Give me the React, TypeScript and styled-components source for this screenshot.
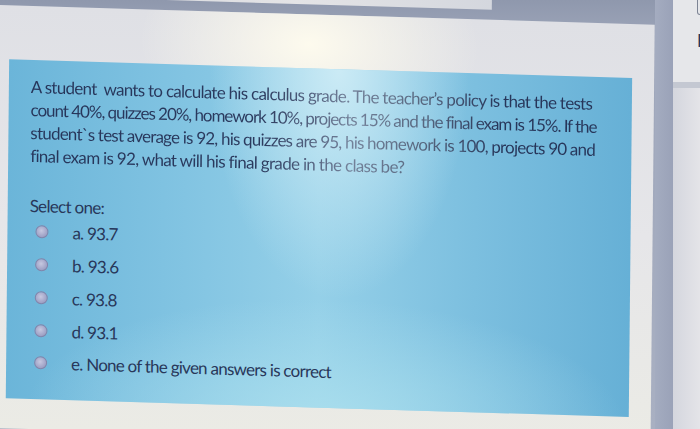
import { createGlobalStyle, styled } from "styled-components";

const GlobalStyle = createGlobalStyle`
    html, body {
        margin: 0;
        padding: 0;
        background: #9aa2b7;
    }
    body {
        font-family: Lato, "Liberation Sans", Arial, sans-serif;
    }
`;

const Page = styled.div`
    display: flex;
    width: 700px;
    height: 429px;
    overflow: hidden;
    background: linear-gradient(180deg, #8f98ad 0px, #9ea6ba 40px, #a9b0c2 100%);
`;

// the screen was photographed at a slight angle, so the column is skewed a little
const MainColumn = styled.div`
    width: 655px;
    margin-top: -25px;
    display: flex;
    flex-direction: column;
    gap: 10px;
    padding-bottom: 1px;
    transform-origin: 0 0;
    transform: matrix(1, 0.03, -0.01, 1, 0, 0);
`;

const PrevCard = styled.div`
    width: 492px;
    height: 20px;
    background: linear-gradient(90deg, #d0d3da 0%, #e4e4e6 60%, #d4d7de 100%);
`;

const QuestionCard = styled.div`
    flex: 1;
    display: flex;
    flex-direction: column;
    padding: 54px 22px 30px 10px;
    background:
        radial-gradient(ellipse 170px 110px at 310px 30px, rgba(255, 252, 238, 0.95), rgba(255, 252, 238, 0) 100%),
        linear-gradient(180deg, #dfe0e5 0%, #e6e6e9 50%, #ebebe5 100%);
`;

const Formulation = styled.div`
    flex: 1;
    padding: 15px 20px 0 22px;
    background:
        radial-gradient(ellipse 130px 230px at 330px 0px, rgba(206, 236, 246, 0.95), rgba(206, 236, 246, 0) 100%),
        radial-gradient(ellipse 300px 120px at 320px 350px, rgba(172, 224, 238, 0.85), rgba(172, 224, 238, 0) 100%),
        linear-gradient(90deg, #6bb5d9 0%, #7fc2e1 25%, #95d0e8 50%, #7cbfdf 75%, #66b0d6 100%);
    color: #28375a;
    font-size: 17px;
    line-height: 23px;
    letter-spacing: -0.7px;
`;

const QuestionText = styled.div`
    margin-bottom: 27px;
    color: transparent;
    background: linear-gradient(
        90deg,
        #26355a 0px,
        #2b3a5e 230px,
        #74829a 320px,
        #586880 390px,
        #27365a 470px
    );
    -webkit-background-clip: text;
    background-clip: text;
`;

const QuestionLine = styled.span<{ $tracking: number }>`
    display: block;
    white-space: pre;
    letter-spacing: ${(props) => props.$tracking}px;
`;

const Prompt = styled.div``;

const AnswerList = styled.div`
    display: flex;
    flex-direction: column;
    margin-top: -1.5px;
`;

const AnswerRow = styled.label`
    display: flex;
    align-items: center;
    height: 32.75px;
    padding-left: 6px;
    gap: 24px;
    letter-spacing: -0.75px;
`;

const RadioDot = styled.span`
    width: 11px;
    height: 11px;
    border-radius: 50%;
    border: 1px solid #8284aa;
    background: radial-gradient(circle at 45% 40%, #c6c8e0 0%, #a6a8ca 55%, #8e90b6 100%);
    flex-shrink: 0;
`;

const Gutter = styled.div`
    width: 18px;
    background: linear-gradient(90deg, #a4acc0 0%, #9aa2b8 100%);
`;

const Sidebar = styled.div`
    flex: 1;
    display: flex;
    flex-direction: column;
    background: linear-gradient(90deg, #d4d6de 0%, #e4e4e8 100%);
    overflow: hidden;
`;

const NavBlock = styled.div`
    height: 82px;
    padding-left: 24px;
    background: #e6e7ea;
    border-bottom: 6px solid #c4c8d2;
    color: #28375a;
    font-size: 17px;
`;

const NavButton = styled.div`
    width: 30px;
    height: 14px;
    border: 1px solid #7d8494;
    border-top: none;
    border-radius: 0 0 3px 3px;
    margin-bottom: 15px;
`;

const NavText = styled.div`
    white-space: nowrap;
`;

const answers = [
    "a. 93.7",
    "b. 93.6",
    "c. 93.8",
    "d. 93.1",
    "e. None of the given answers is correct",
];

const questionLines = [
    {
        text: "A student  wants to calculate his calculus grade. The teacher\u2019s policy is that the tests",
        tracking: -0.72,
    },
    {
        text: "count 40%, quizzes 20%, homework 10%, projects 15% and the final exam is 15%. If the",
        tracking: -1.05,
    },
    {
        text: "student`s test average is 92, his quizzes are 95, his homework is 100, projects 90 and",
        tracking: -0.79,
    },
    {
        text: "final exam is 92, what will his final grade in the class be?",
        tracking: -0.68,
    },
];

export default function App() {
    return (
        <>
            <GlobalStyle />
            <Page>
                <MainColumn>
                    <PrevCard />
                    <QuestionCard>
                        <Formulation>
                            <QuestionText>
                                {questionLines.map((line) => (
                                    <QuestionLine key={line.text} $tracking={line.tracking}>
                                        {line.text}
                                    </QuestionLine>
                                ))}
                            </QuestionText>
                            <Prompt>Select one:</Prompt>
                            <AnswerList>
                                {answers.map((answer) => (
                                    <AnswerRow key={answer}>
                                        <RadioDot />
                                        {answer}
                                    </AnswerRow>
                                ))}
                            </AnswerList>
                        </Formulation>
                    </QuestionCard>
                </MainColumn>
                <Gutter />
                <Sidebar>
                    <NavBlock>
                        <NavButton />
                        <NavText>Finish attempt ...</NavText>
                    </NavBlock>
                </Sidebar>
            </Page>
        </>
    );
}
